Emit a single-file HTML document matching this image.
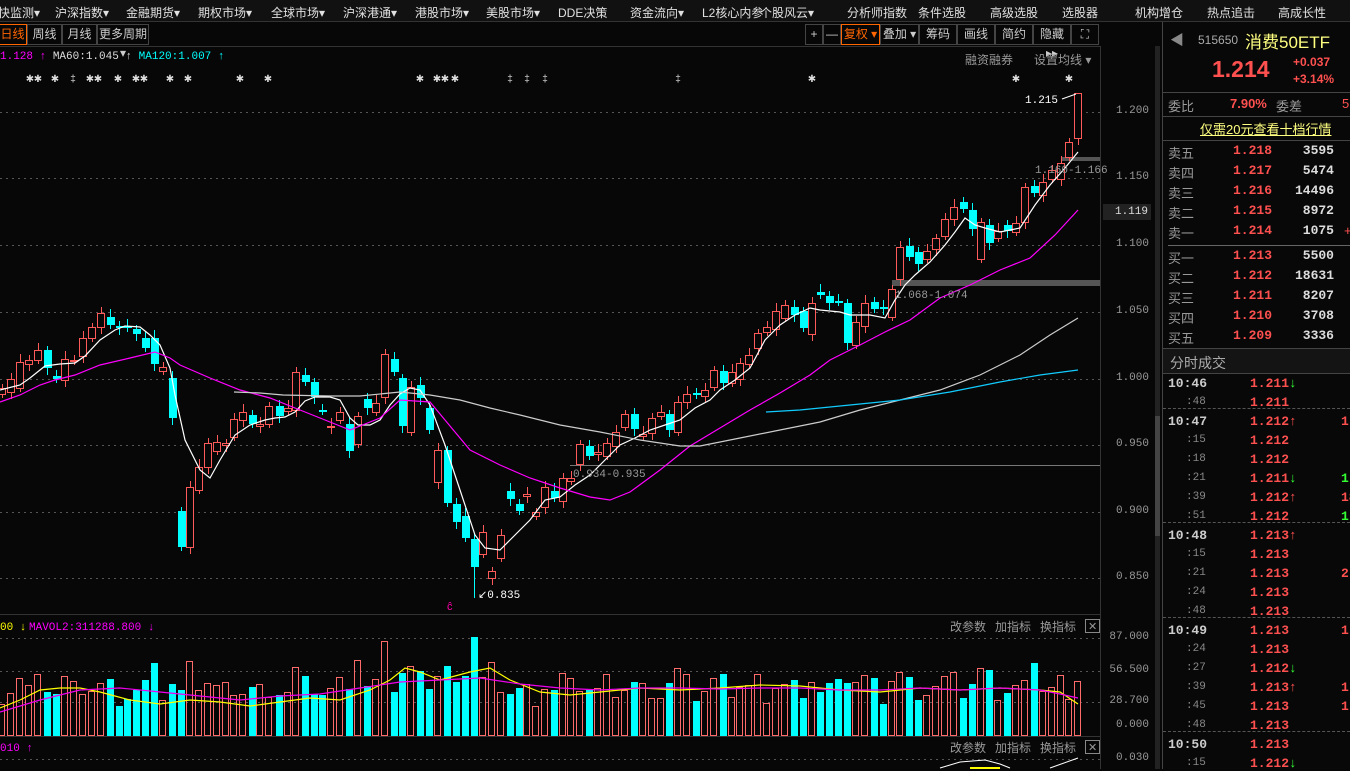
<!DOCTYPE html>
<html><head><meta charset="utf-8">
<style>
*{margin:0;padding:0;box-sizing:border-box}
body{width:1350px;height:769px;background:#070707;overflow:hidden;position:relative;font-family:"Liberation Sans","Noto Sans CJK SC",sans-serif;color:#ccc;font-size:12px}
.a{position:absolute;white-space:nowrap}
.menu{left:0;top:0;width:1350px;height:22px;background:#111;border-bottom:1px solid #333}
.menu span{position:absolute;top:4px;color:#e0e0e0;font-size:12px}
.btn{position:absolute;top:24px;height:21px;border:1px solid #444;color:#ccc;font-size:12px;text-align:center;line-height:19px}
.mono{font-family:"Liberation Mono","DejaVu Sans Mono",monospace}
.red{color:#ff5050}
.rp{left:1162px;top:22px;width:188px;height:747px;background:#080808;border-left:1px solid #444}
.hl{position:absolute;left:1163px;width:187px;height:1px;background:#444}
.dl{position:absolute;left:1163px;width:187px;border-top:1px dashed #555}
.ob{position:absolute;font-size:13px}
</style></head><body>
<div class="a menu">
<span style="left:-2px">快监测▾</span><span style="left:55px">沪深指数▾</span><span style="left:126px">金融期货▾</span><span style="left:198px">期权市场▾</span><span style="left:271px">全球市场▾</span><span style="left:343px">沪深港通▾</span><span style="left:415px">港股市场▾</span><span style="left:486px">美股市场▾</span><span style="left:558px">DDE决策</span><span style="left:630px">资金流向▾</span><span style="left:702px">L2核心内参</span><span style="left:760px">个股风云▾</span><span style="left:847px">分析师指数</span><span style="left:918px">条件选股</span><span style="left:990px">高级选股</span><span style="left:1062px">选股器</span><span style="left:1135px">机构增仓</span><span style="left:1207px">热点追击</span><span style="left:1278px">高成长性</span>
</div>
<div class="btn" style="left:-2px;width:29px;border-color:#f60;color:#f60">日线</div>
<div class="btn" style="left:27px;width:35px">周线</div>
<div class="btn" style="left:62px;width:35px">月线</div>
<div class="btn" style="left:97px;width:52px">更多周期 ▾</div>
<div class="btn" style="left:805px;width:18px">+</div>
<div class="btn" style="left:823px;width:18px">—</div>
<div class="btn" style="left:841px;width:39px;border-color:#f60;color:#f60">复权 ▾</div>
<div class="btn" style="left:880px;width:39px">叠加 ▾</div>
<div class="btn" style="left:919px;width:38px">筹码</div>
<div class="btn" style="left:957px;width:38px">画线</div>
<div class="btn" style="left:995px;width:38px">简约</div>
<div class="btn" style="left:1033px;width:38px">隐藏 ▸▸</div>
<div class="btn" style="left:1071px;width:28px">⛶</div>
<div class="a" style="left:0;top:46px;width:1100px;height:1px;background:#333"></div>
<div class="a mono" style="left:0;top:51px;font-size:11px"><span style="color:#f0f">1.128 ↑</span> <span style="color:#ddd">MA60:1.045 ↑</span> <span style="color:#0ff">MA120:1.007 ↑</span></div>
<div class="a" style="left:965px;top:51px;color:#999">融资融券</div>
<div class="a" style="left:1034px;top:51px;color:#999">设置均线 ▾</div>
<div class="a" style="left:1100px;top:46px;width:1px;height:723px;background:#333"></div>
<div class="a" style="left:1155px;top:46px;width:5px;height:723px;background:#222"></div>
<div class="a" style="left:1155px;top:416px;width:5px;height:120px;background:#444"></div>
<svg class="a" style="left:0;top:0" width="1160" height="769" id="sv"></svg>
<div class="a" id="ax" style="left:1100px;top:0;width:55px;height:769px"></div>

<div class="a rp"></div>
<div class="a" style="left:1170px;top:30px;color:#888;font-size:14px">◀</div>
<div class="a" style="left:1198px;top:33px;color:#aaa;font-size:12px">515650</div>
<div class="a" style="left:1245px;top:28px;color:#ffff80;font-size:17px">消费50ETF</div>
<div class="a red" style="left:1212px;top:56px;font-size:23px;font-weight:bold">1.214</div>
<div class="a red" style="left:1293px;top:55px;font-size:12px;font-weight:bold">+0.037</div>
<div class="a red" style="left:1293px;top:72px;font-size:12px;font-weight:bold">+3.14%</div>
<div class="hl" style="top:92px"></div>
<div class="ob" style="left:1168px;top:96px;color:#999">委比</div><div class="ob red" style="left:1230px;top:96px;font-weight:bold">7.90%</div><div class="ob" style="left:1276px;top:96px;color:#999">委差</div><div class="ob red" style="left:1342px;top:96px">5</div>
<div class="hl" style="top:116px"></div>
<div class="ob" style="left:1200px;top:119px;color:#ffff80;text-decoration:underline">仅需20元查看十档行情</div>
<div class="hl" style="top:140px"></div>
<div id="ob"></div>
<div class="a" style="left:1168px;top:245px;width:182px;height:1px;background:#666"></div>
<div class="hl" style="top:348px"></div>
<div class="a" style="left:1163px;top:349px;width:187px;height:24px;background:#141414"></div>
<div class="ob" style="left:1170px;top:353px;color:#aaa;font-size:14px">分时成交</div>
<div class="hl" style="top:373px"></div>
<div id="tk"></div>
<script>
var sv=document.getElementById('sv'),h='';
function ln(x1,y1,x2,y2,c,d){h+='<line x1="'+x1+'" y1="'+y1+'" x2="'+x2+'" y2="'+y2+'" stroke="'+c+'" stroke-width="1" '+(d?'stroke-dasharray="2,4"':'')+'/>';}
[112,178,245,312,379,445,512,578].forEach(function(y){ln(0,y+.5,1100,y+.5,'#555',1)});
[638,671,702].forEach(function(y){ln(0,y+.5,1100,y+.5,'#555',1)});ln(0,759.5,1100,759.5,'#555',1);
ln(0,614.5,1100,614.5,'#333');ln(0,736.5,1100,736.5,'#333');
ln(570,465.5,1100,465.5,'#777');
h+='<rect x="892" y="280" width="208" height="6" fill="#555"/><rect x="1062" y="157" width="38" height="4" fill="#555"/>';
var C="2:388-394:r,11:379-392:r,20:362-388:r,29:360-364:r,38:350-360:r,47:350-368:c,56:376-379:c,65:359-380:r,74:360-361:r,83:338-356:r,92:327-338:r,101:313-327:r,110:317-325:c,119:326-328:c,127:326-328:c,136:329-334:c,145:338-348:c,154:338-364:c,163:367-371:r,172:378-418:c,181:511-547:c,190:487-547:r,199:467-490:r,208:443-467:r,217:442-451:r,226:443-445:r,234:419-437:r,243:412-420:r,252:415-424:c,260:424-426:r,269:406-424:r,279:406-416:c,288:408-411:r,296:372-410:r,305:375-382:c,314:382-397:c,322:410-411:c,331:426-427:r,340:412-420:r,349:424-451:c,358:416-444:r,367:399-408:c,376:403-412:r,385:354-397:r,394:359-372:c,402:378-426:c,411:387-432:r,420:385-398:c,429:408-430:c,438:450-482:r,447:450-503:c,456:504-522:c,465:516-538:c,474:539-567:c,483:532-554:r,492:571-578:r,501:535-558:r,510:491-499:c,519:504-511:c,527:494-496:r,536:512-516:r,545:487-507:r,554:491-498:c,563:478-501:r,571:478-481:r,580:444-464:r,589:446-456:c,598:452-454:r,607:443-456:r,616:432-446:r,625:414-427:r,634:414-429:c,643:434-436:r,652:418-433:r,661:412-416:r,669:414-430:c,678:402-432:r,687:394-402:r,696:393-395:c,705:390-396:r,714:370-387:r,723:371-383:c,732:372-383:r,740:363-379:r,749:355-364:r,758:333-348:r,767:327-332:r,776:311-329:r,785:305-318:r,794:307-315:c,803:311-328:c,812:303-334:r,820:292-295:c,829:296-303:c,838:301-302:c,847:303-343:c,856:322-345:r,865:303-326:r,874:302-309:c,883:307-308:c,892:289-317:r,900:247-279:r,909:246-257:c,918:252-264:c,927:251-259:r,936:238-249:r,945:219-236:r,954:207-219:r,963:202-209:c,972:210-229:c,981:222-259:r,989:225-243:c,998:231-238:r,1007:225-231:c,1016:223-232:r,1025:187-222:r,1034:186-193:c,1043:182-195:r,1052:170-179:r,1061:163-179:r,1069:142-157:r,1078:93-138:r";
var spikes={385:641,474:637,358:660,492:662,1034:663,181:690,172:684,447:666,456:682,465:676,1025:680};
C.split(',').forEach(function(s,i){var p=s.split(':'),x=+p[0],ab=p[1].split('-'),a=+ab[0],b=+ab[1],r=p[2]=='r',col=r?'#ff5a5a':'#00ffff';
 var hi=a-4-(i*7%5),lo=b+4+(i*3%6);if(x==474)lo=598;if(x==1078)hi=93;
 ln(x+.5,hi,x+.5,lo,col);
 if(r)h+='<rect x="'+(x-3.5)+'" y="'+(a+.5)+'" width="7" height="'+Math.max(1,b-a)+'" fill="#070707" stroke="'+col+'"/>';
 else h+='<rect x="'+(x-3)+'" y="'+a+'" width="8" height="'+Math.max(2,b-a)+'" fill="'+col+'"/>';
 var vt=Math.round(spikes[x]||(736-(28+((i*37)%30)+Math.min(20,(b-a)*0.6))));
 if(r)h+='<rect x="'+(x-3.5)+'" y="'+(vt+.5)+'" width="6" height="'+(735-vt)+'" fill="none" stroke="#ff6a6a"/>';
 else h+='<rect x="'+(x-3)+'" y="'+vt+'" width="7" height="'+(736-vt)+'" fill="#00ffff"/>';
});
function pl(pts,c){h+='<polyline fill="none" stroke="'+c+'" stroke-width="1.2" points="'+pts+'"/>';}
pl("0,390 20,385 30,378 45,366 60,364 75,363 85,356 100,340 115,330 125,326 140,327 150,335 160,345 170,368 175,395 185,440 200,470 210,478 220,460 235,435 250,425 265,420 275,418 285,417 295,412 305,401 315,397 330,397 340,400 350,418 358,425 370,425 380,420 390,405 400,394 410,388 420,390 430,405 445,445 460,490 475,535 485,548 500,550 510,540 520,530 530,520 545,500 560,497 575,485 590,475 605,460 620,445 635,438 650,430 665,425 680,420 695,408 710,400 720,390 735,380 750,368 765,340 780,325 795,315 810,308 820,310 840,312 850,315 870,315 885,318 895,300 905,285 915,275 930,262 945,245 955,232 965,218 975,225 985,228 1000,232 1020,228 1035,205 1050,185 1065,168 1078,152",'#fff');
pl("0,402 20,395 40,385 55,380 75,375 100,365 130,358 155,352 170,358 180,365 210,378 240,390 270,398 300,410 330,422 350,430 380,418 400,400 430,402 445,420 470,450 500,465 530,478 560,488 590,497 610,500 630,492 660,470 690,446 720,428 750,410 780,393 810,375 830,360 860,345 885,332 910,320 940,298 970,285 1000,270 1030,258 1055,235 1078,210",'#f0f');
pl("234,392 260,393 283,395 330,396 360,396 400,392 430,395 460,400 490,408 520,415 560,425 600,432 640,440 680,446 700,446 740,438 780,430 820,422 860,410 900,400 940,390 980,375 1020,355 1050,335 1078,318",'#ccc');
pl("766,412 800,410 850,405 900,400 950,392 1000,382 1040,375 1078,370",'#1cf');
pl("0,708 20,700 40,690 60,688 80,688 100,692 130,700 160,704 190,700 220,702 250,706 280,702 310,698 340,700 370,690 390,680 405,668 420,672 440,680 470,672 490,668 510,680 540,692 570,695 600,692 640,688 680,690 720,688 760,685 800,686 840,690 880,692 920,688 960,690 1000,688 1040,690 1060,692 1078,704",'#ff0');
pl("0,712 40,700 80,690 120,688 160,692 200,696 240,700 280,696 320,694 360,688 400,682 440,680 480,678 520,684 560,688 600,690 640,688 680,688 720,689 760,688 800,688 840,690 880,690 920,688 960,690 1000,688 1040,690 1060,694 1078,698",'#e0e');
h+='<polyline fill="none" stroke="#fff" stroke-width="1" points="940,768 960,762 985,760 1000,764 1010,768"/><polyline fill="none" stroke="#fff" stroke-width="1" points="1050,768 1078,758"/><polyline fill="none" stroke="#ff0" stroke-width="2" points="970,768 1000,768"/>';
var st=[[30,'✱'],[38,'✱'],[55,'✱'],[73,'‡'],[90,'✱'],[98,'✱'],[118,'✱'],[136,'✱'],[144,'✱'],[170,'✱'],[188,'✱'],[240,'✱'],[268,'✱'],[420,'✱'],[437,'✱'],[445,'✱'],[455,'✱'],[510,'‡'],[527,'‡'],[545,'‡'],[678,'‡'],[812,'✱'],[1016,'✱'],[1069,'✱']];
st.forEach(function(s){h+='<text x="'+s[0]+'" y="82" fill="#ddd" font-size="10" text-anchor="middle">'+s[1]+'</text>'});
h+='<text x="1025" y="103" fill="#fff" font-size="11" font-family="Liberation Mono">1.215</text><polyline points="1062,99 1076,94" stroke="#fff" fill="none"/>';
h+='<text x="478" y="598" fill="#fff" font-size="11" font-family="Liberation Mono">↙0.835</text>';
h+='<text x="447" y="610" fill="#f0a" font-size="11">ĉ</text>';
h+='<text x="573" y="477" fill="#999" font-size="11" font-family="Liberation Mono">0.934-0.935</text>';
h+='<text x="895" y="298" fill="#999" font-size="11" font-family="Liberation Mono">1.068-1.074</text>';
h+='<text x="1035" y="173" fill="#999" font-size="11" font-family="Liberation Mono">1.160-1.166</text>';
h+='<text x="0" y="630" fill="#ff0" font-size="11" font-family="Liberation Mono">00 ↓</text><text x="29" y="630" fill="#f0f" font-size="11" font-family="Liberation Mono">MAVOL2:311288.800 ↓</text>';
h+='<text x="0" y="751" fill="#f0f" font-size="11" font-family="Liberation Mono">010 ↑</text>';
[631,752].forEach(function(y){h+='<text x="950" y="'+y+'" fill="#999" font-size="12">改参数</text><text x="995" y="'+y+'" fill="#999" font-size="12">加指标</text><text x="1040" y="'+y+'" fill="#999" font-size="12">换指标</text><rect x="1085.5" y="'+(y-11.5)+'" width="14" height="13" fill="none" stroke="#888"/><text x="1088" y="'+(y-1)+'" fill="#999" font-size="11">✕</text>'});
sv.innerHTML=h;
var ax='';[[112,'1.200'],[178,'1.150'],[245,'1.100'],[312,'1.050'],[379,'1.000'],[445,'0.950'],[512,'0.900'],[578,'0.850'],[638,'87.000'],[671,'56.500'],[702,'28.700'],[726,'0.000'],[759,'0.030']].forEach(function(a){ax+='<div class="a mono" style="right:6px;top:'+(a[0]-7)+'px;color:#999;font-size:11px">'+a[1]+'</div>'});
ax+='<div class="a mono" style="left:3px;top:204px;width:48px;height:16px;background:#222;color:#ddd;font-size:11px;text-align:right;padding-right:3px;line-height:16px">1.119</div>';
document.getElementById('ax').innerHTML=ax;
var ob='',rows=[['卖五','1.218','3595'],['卖四','1.217','5474'],['卖三','1.216','14496'],['卖二','1.215','8972'],['卖一','1.214','1075'],['买一','1.213','5500'],['买二','1.212','18631'],['买三','1.211','8207'],['买四','1.210','3708'],['买五','1.209','3336']];
rows.forEach(function(r,i){var y=(i<5?143+20*i:248+20*(i-5));ob+='<div class="ob" style="left:1168px;top:'+y+'px;color:#999">'+r[0]+'</div><div class="ob mono red" style="left:1233px;top:'+y+'px;font-weight:bold">'+r[1]+'</div><div class="ob mono" style="right:16px;top:'+y+'px;color:#ddd;font-weight:bold">'+r[2]+'</div>'});
ob+='<div class="ob red" style="left:1344px;top:223px">+</div>';
document.getElementById('ob').innerHTML=ob;
var T=[['10:46','1.211','d',''],[':48','1.211','',''],['10:47','1.212','u','1','r'],[':15','1.212','',''],[':18','1.212','',''],[':21','1.211','d','1','g'],[':39','1.212','u','18','r'],[':51','1.212','','1','g'],['10:48','1.213','u',''],[':15','1.213','',''],[':21','1.213','','2','r'],[':24','1.213','',''],[':48','1.213','',''],['10:49','1.213','','1','r'],[':24','1.213','',''],[':27','1.212','d',''],[':39','1.213','u','1','r'],[':45','1.213','','1','r'],[':48','1.213','',''],['10:50','1.213','',''],[':15','1.212','d','']];
var tk='',y=376,dash=[2,8,13,19];
T.forEach(function(t,i){if(dash.indexOf(i)>=0){tk+='<div class="dl" style="top:'+(y-6)+'px"></div>';}
 var big=t[0].length>3;tk+='<div class="ob mono" style="'+(big?'left:1168px;font-weight:bold;color:#ccc;font-size:13px':'left:1186px;color:#888;font-size:11px')+';top:'+(big?y:y+1)+'px">'+t[0]+'</div>';
 tk+='<div class="ob mono red" style="left:1250px;top:'+y+'px;font-weight:bold">'+t[1]+(t[2]=='u'?'<span style="color:#ff5050">↑</span>':t[2]=='d'?'<span style="color:#3f3">↓</span>':'')+'</div>';
 if(t[3])tk+='<div class="ob mono" style="left:1341px;top:'+y+'px;font-weight:bold;color:'+(t[4]=='g'?'#3f3':'#ff5050')+'">'+t[3]+'</div>';
 y+=19;});
document.getElementById('tk').innerHTML=tk;
</script>
</body></html>
